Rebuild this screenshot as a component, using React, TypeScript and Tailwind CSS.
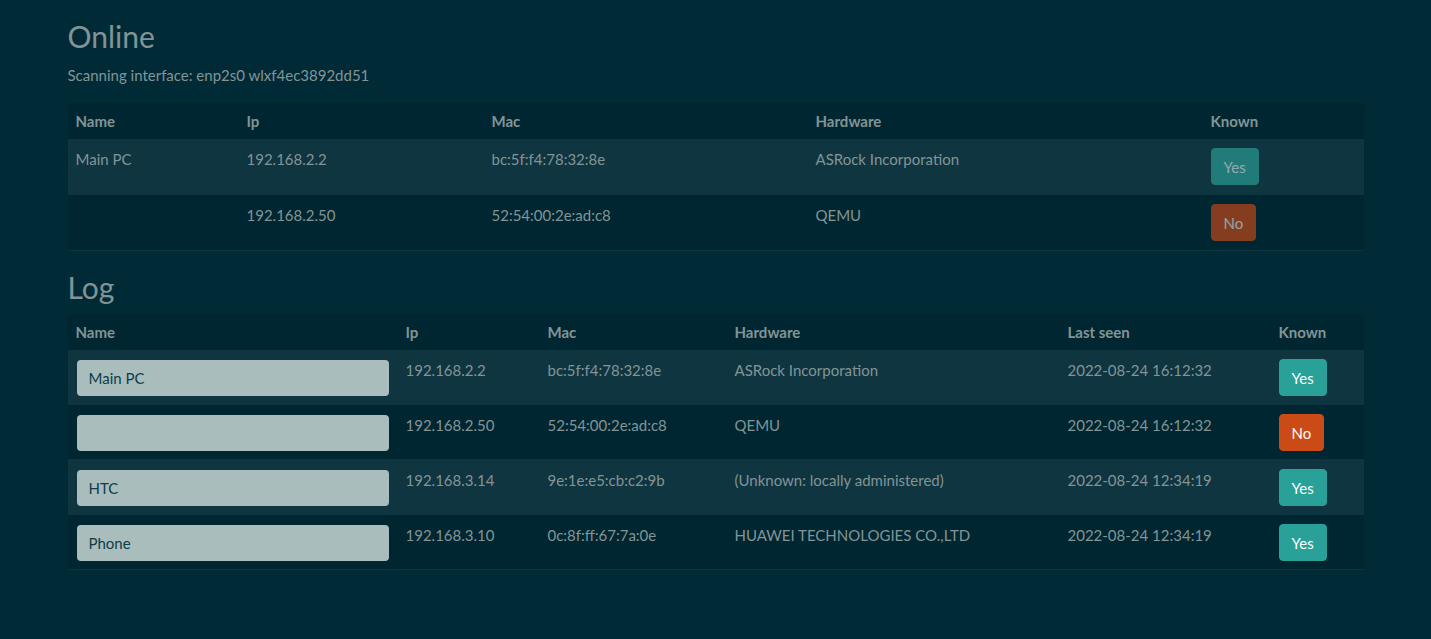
import React from "react";

type OnlineRow = { name: string; ip: string; mac: string; hardware: string; known: boolean };
type LogRow = OnlineRow & { lastSeen: string };

const online: OnlineRow[] = [
	{ name: "Main PC", ip: "192.168.2.2", mac: "bc:5f:f4:78:32:8e", hardware: "ASRock Incorporation", known: true },
	{ name: "", ip: "192.168.2.50", mac: "52:54:00:2e:ad:c8", hardware: "QEMU", known: false },
];

const log: LogRow[] = [
	{ name: "Main PC", ip: "192.168.2.2", mac: "bc:5f:f4:78:32:8e", hardware: "ASRock Incorporation", lastSeen: "2022-08-24 16:12:32", known: true },
	{ name: "", ip: "192.168.2.50", mac: "52:54:00:2e:ad:c8", hardware: "QEMU", lastSeen: "2022-08-24 16:12:32", known: false },
	{ name: "HTC", ip: "192.168.3.14", mac: "9e:1e:e5:cb:c2:9b", hardware: "(Unknown: locally administered)", lastSeen: "2022-08-24 12:34:19", known: true },
	{ name: "Phone", ip: "192.168.3.10", mac: "0c:8f:ff:67:7a:0e", hardware: "HUAWEI TECHNOLOGIES CO.,LTD", lastSeen: "2022-08-24 12:34:19", known: true },
];

function KnownButton({ known, disabled }: { known: boolean; disabled?: boolean }) {
	return (
		<button
			disabled={disabled}
			className={`h-[37px] px-3 rounded-[4px] border text-[15px] leading-6 ${
				known ? "bg-[#2aa198] border-[#2aa198]" : "bg-[#cb4b16] border-[#cb4b16]"
			} ${disabled ? "opacity-65 text-[#dfe6e6]" : "text-white"}`}
		>
			{known ? "Yes" : "No"}
		</button>
	);
}

export default function App() {
	return (
		<div
			className="min-h-[639px] bg-[#002b36] text-[#839496] text-[15px]"
			style={{ fontFamily: "Lato, 'Noto Sans', sans-serif" }}
		>
			<div className="w-[1296px] mx-auto pt-[17px]">
				{/* Online */}
				<h2 className="text-[30px] leading-[38px] mb-2">Online</h2>
				<p className="leading-6 mb-4">Scanning interface: enp2s0 wlxf4ec3892dd51</p>
				<table className="w-full table-fixed bg-[#002731] border-collapse">
					<colgroup>
						<col className="w-[171px]" />
						<col className="w-[245px]" />
						<col className="w-[324px]" />
						<col className="w-[395px]" />
						<col className="w-[161px]" />
					</colgroup>
					<thead>
						<tr className="text-left font-bold">
							<th className="px-2 py-2 leading-5">Name</th>
							<th className="px-2 py-2 leading-5">Ip</th>
							<th className="px-2 py-2 leading-5">Mac</th>
							<th className="px-2 py-2 leading-5">Hardware</th>
							<th className="px-2 py-2 leading-5">Known</th>
						</tr>
					</thead>
					<tbody>
						{online.map((r, i) => (
							<tr
								key={r.ip}
								className={`align-top leading-6 border-b border-[#0b3541] ${i % 2 === 0 ? "bg-[#0f3540]" : ""}`}
							>
								<td className="px-2 py-2">{r.name}</td>
								<td className="px-2 py-2">{r.ip}</td>
								<td className="px-2 py-2">{r.mac}</td>
								<td className="px-2 py-2">{r.hardware}</td>
								<td className="px-2 pt-[9px] pb-[9px]">
									<KnownButton known={r.known} disabled />
								</td>
							</tr>
						))}
					</tbody>
				</table>

				{/* Log */}
				<h2 className="text-[30px] leading-[38px] mt-[17px] mb-2">Log</h2>
				<table className="w-full table-fixed bg-[#002731] border-collapse">
					<colgroup>
						<col className="w-[330px]" />
						<col className="w-[142px]" />
						<col className="w-[187px]" />
						<col className="w-[333px]" />
						<col className="w-[211px]" />
						<col className="w-[93px]" />
					</colgroup>
					<thead>
						<tr className="text-left font-bold">
							<th className="px-2 py-2 leading-5">Name</th>
							<th className="px-2 py-2 leading-5">Ip</th>
							<th className="px-2 py-2 leading-5">Mac</th>
							<th className="px-2 py-2 leading-5">Hardware</th>
							<th className="px-2 py-2 leading-5">Last seen</th>
							<th className="px-2 py-2 leading-5">Known</th>
						</tr>
					</thead>
					<tbody>
						{log.map((r, i) => (
							<tr
								key={r.ip}
								className={`align-top leading-6 border-b border-[#0b3541] ${i % 2 === 0 ? "bg-[#0f3540]" : ""}`}
							>
								<td className="px-2 py-2">
									<input
										defaultValue={r.name}
										className="block w-[312px] h-9 mt-[2px] ml-px px-3 rounded-[4px] bg-[#a9bdbd] text-[#0d3c48] outline-none"
									/>
								</td>
								<td className="px-2 py-2">{r.ip}</td>
								<td className="px-2 py-2">{r.mac}</td>
								<td className="px-2 py-2">{r.hardware}</td>
								<td className="px-2 py-2">{r.lastSeen}</td>
								<td className="px-2 pt-[9px] pb-2">
									<KnownButton known={r.known} />
								</td>
							</tr>
						))}
					</tbody>
				</table>
			</div>
		</div>
	);
}
